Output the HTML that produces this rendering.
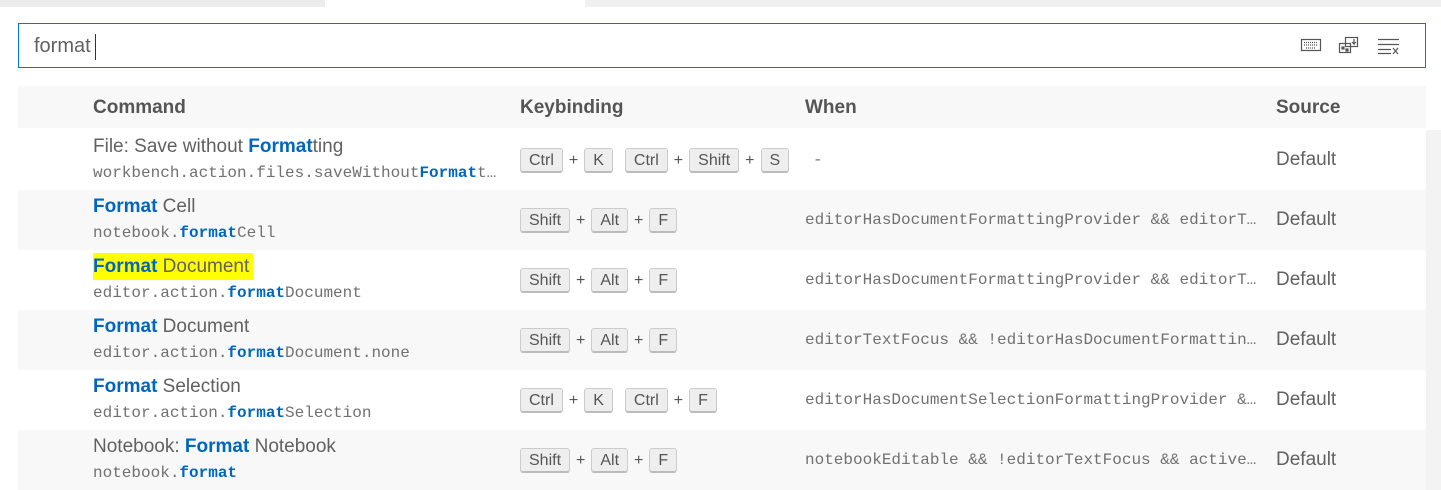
<!DOCTYPE html>
<html><head><meta charset="utf-8"><style>
*{margin:0;padding:0;box-sizing:border-box}
body{width:1441px;height:490px;overflow:hidden;background:#fff;font-family:"Liberation Sans",sans-serif;color:#616161;position:relative}
.abs{position:absolute}
.b{color:#0066bf;font-weight:bold}
.row{position:absolute;left:18px;width:1408px;height:60px}
.g{background:#f8f8f8}
.t1{position:absolute;left:75px;top:6px;font-size:19px;color:#616161;white-space:nowrap}
.t2{position:absolute;left:75px;top:34px;font-family:"Liberation Mono",monospace;font-size:16px;color:#717171;white-space:nowrap}
.kb{position:absolute;left:502px;top:18px;font-size:16px;white-space:nowrap;display:flex;align-items:center}
.k{display:inline-block;border:1px solid #ccc;border-bottom-color:#bbb;box-shadow:inset 0 -1px 0 #bbb;background:#eee;border-radius:3px;padding:0 8px;height:25px;line-height:23px;color:#555}
.p{margin:0 6px;color:#555}
.sp{width:12px}
.w{position:absolute;left:787px;top:21px;font-family:"Liberation Mono",monospace;font-size:16px;color:#717171;white-space:nowrap}
.s{position:absolute;left:1258px;top:19px;font-size:19px;color:#616161}
</style></head><body>
<div class="abs" style="left:0;top:0;width:325px;height:7px;background:#ececec"></div>
<div class="abs" style="left:585px;top:0;width:856px;height:7px;background:#f0f0f0"></div>
<div class="abs" style="left:18px;top:23px;width:1408px;height:45px;border:1px solid #0078d4"></div>
<div class="abs" style="left:34px;top:35px;font-size:20px;color:#616161">format</div>
<div class="abs" style="left:95px;top:34px;width:1px;height:26px;background:#333"></div>
<svg class="abs" style="left:1300px;top:36px" width="22" height="18" viewBox="0 0 22 18" fill="none" stroke="#555" stroke-width="1.2"><rect x="1.5" y="3.5" width="19" height="11"/><path d="M4 6.5h14M4 9h14M6 12h10" stroke-dasharray="1 1"/></svg>
<svg class="abs" style="left:1338px;top:35px" width="24" height="22" viewBox="0 0 24 22" fill="none" stroke="#555" stroke-width="1.2"><rect x="1.5" y="8.5" width="11" height="9"/><rect x="7.5" y="2.5" width="12" height="9"/><path d="M16 4v5l-2-2M16 9l2-2"/><rect x="4" y="12" width="2" height="2" fill="#555"/><rect x="8" y="14" width="2" height="2" fill="#555"/></svg>
<svg class="abs" style="left:1377px;top:37px" width="24" height="18" viewBox="0 0 24 18" fill="none" stroke="#555" stroke-width="1.2"><path d="M1 2.5h21M1 7.5h21M1 12.5h13M1 16.5h13M16 11l5 6M21 11l-5 6"/></svg>
<div class="abs" style="left:18px;top:86px;width:1408px;height:42px;background:#f8f8f8"></div>
<div class="abs" style="left:93px;top:97px;font-size:19px;font-weight:bold;color:#555">Command</div>
<div class="abs" style="left:520px;top:97px;font-size:19px;font-weight:bold;color:#555">Keybinding</div>
<div class="abs" style="left:805px;top:97px;font-size:19px;font-weight:bold;color:#555">When</div>
<div class="abs" style="left:1276px;top:97px;font-size:19px;font-weight:bold;color:#555">Source</div>
<div class="abs" style="left:1426px;top:130px;width:15px;height:360px;background:#f3f3f3"></div>

<div class="row" style="top:130px">
<div class="t1">File: Save without <span class="b">Format</span>ting</div>
<div class="t2">workbench.action.files.saveWithout<span class="b">Format</span>t…</div>
<div class="kb"><span class="k">Ctrl</span><span class="p">+</span><span class="k">K</span><span class="sp"></span><span class="k">Ctrl</span><span class="p">+</span><span class="k">Shift</span><span class="p">+</span><span class="k">S</span></div>
<div class="w" style="left:795px">-</div><div class="s">Default</div></div>

<div class="row g" style="top:190px">
<div class="t1"><span class="b">Format</span> Cell</div>
<div class="t2">notebook.<span class="b">format</span>Cell</div>
<div class="kb"><span class="k">Shift</span><span class="p">+</span><span class="k">Alt</span><span class="p">+</span><span class="k">F</span></div>
<div class="w">editorHasDocumentFormattingProvider &amp;&amp; editorT…</div><div class="s">Default</div></div>

<div class="row" style="top:250px">
<div class="t1"><span style="background:#ffff00;padding:3px 4px 3px 0"><span class="b">Format</span> Document</span></div>
<div class="t2">editor.action.<span class="b">format</span>Document</div>
<div class="kb"><span class="k">Shift</span><span class="p">+</span><span class="k">Alt</span><span class="p">+</span><span class="k">F</span></div>
<div class="w">editorHasDocumentFormattingProvider &amp;&amp; editorT…</div><div class="s">Default</div></div>

<div class="row g" style="top:310px">
<div class="t1"><span class="b">Format</span> Document</div>
<div class="t2">editor.action.<span class="b">format</span>Document.none</div>
<div class="kb"><span class="k">Shift</span><span class="p">+</span><span class="k">Alt</span><span class="p">+</span><span class="k">F</span></div>
<div class="w">editorTextFocus &amp;&amp; !editorHasDocumentFormattin…</div><div class="s">Default</div></div>

<div class="row" style="top:370px">
<div class="t1"><span class="b">Format</span> Selection</div>
<div class="t2">editor.action.<span class="b">format</span>Selection</div>
<div class="kb"><span class="k">Ctrl</span><span class="p">+</span><span class="k">K</span><span class="sp"></span><span class="k">Ctrl</span><span class="p">+</span><span class="k">F</span></div>
<div class="w">editorHasDocumentSelectionFormattingProvider &amp;…</div><div class="s">Default</div></div>

<div class="row g" style="top:430px">
<div class="t1">Notebook: <span class="b">Format</span> Notebook</div>
<div class="t2">notebook.<span class="b">format</span></div>
<div class="kb"><span class="k">Shift</span><span class="p">+</span><span class="k">Alt</span><span class="p">+</span><span class="k">F</span></div>
<div class="w">notebookEditable &amp;&amp; !editorTextFocus &amp;&amp; active…</div><div class="s">Default</div></div>
</body></html>
